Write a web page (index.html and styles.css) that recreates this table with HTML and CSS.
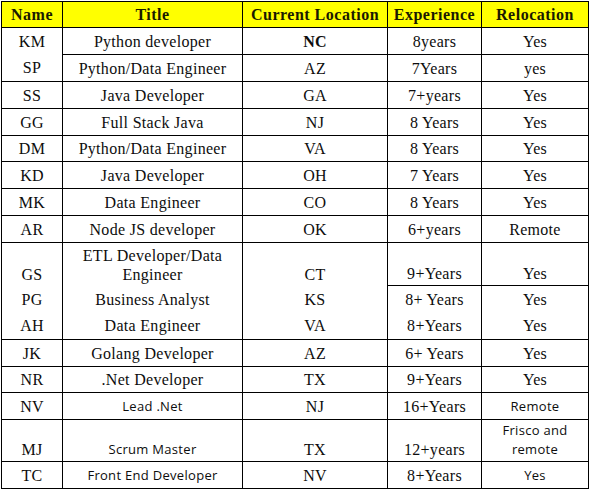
FILE: index.html
```html
<!DOCTYPE html>
<html>
<head>
<meta charset="utf-8">
<link rel="stylesheet" href="styles.css">
</head>
<body>
<table class="grid">
  <colgroup>
    <col class="c-name"><col class="c-title"><col class="c-loc"><col class="c-exp"><col class="c-rel">
  </colgroup>
  <thead>
    <tr class="h26">
      <th>Name</th><th>Title</th><th>Current Location</th><th>Experience</th><th>Relocation</th>
    </tr>
  </thead>
  <tbody>
    <tr class="h27"><td class="nb">KM</td><td>Python developer</td><td class="b">NC</td><td>8years</td><td>Yes</td></tr>
    <tr class="h27"><td class="nt">SP</td><td>Python/Data Engineer</td><td>AZ</td><td>7Years</td><td>yes</td></tr>
    <tr class="h27"><td>SS</td><td>Java Developer</td><td>GA</td><td>7+years</td><td>Yes</td></tr>
    <tr class="h27"><td>GG</td><td>Full Stack Java</td><td>NJ</td><td>8 Years</td><td>Yes</td></tr>
    <tr class="h26"><td>DM</td><td>Python/Data Engineer</td><td>VA</td><td>8 Years</td><td>Yes</td></tr>
    <tr class="h27"><td>KD</td><td>Java Developer</td><td>OH</td><td>7 Years</td><td>Yes</td></tr>
    <tr class="h27"><td>MK</td><td>Data Engineer</td><td>CO</td><td>8 Years</td><td>Yes</td></tr>
    <tr class="h27"><td>AR</td><td>Node JS developer</td><td>OK</td><td>6+years</td><td>Remote</td></tr>
    <tr class="h43 bot"><td class="nb">GS</td><td class="nb">ETL Developer/Data<br>Engineer</td><td class="nb">CT</td><td>9+Years</td><td>Yes</td></tr>
    <tr class="h27"><td class="nt nb">PG</td><td class="nt nb">Business Analyst</td><td class="nt nb">KS</td><td class="nb">8+ Years</td><td class="nb">Yes</td></tr>
    <tr class="h27"><td class="nt">AH</td><td class="nt">Data Engineer</td><td class="nt">VA</td><td class="nt">8+Years</td><td class="nt">Yes</td></tr>
    <tr class="h27"><td>JK</td><td>Golang Developer</td><td>AZ</td><td>6+ Years</td><td>Yes</td></tr>
    <tr class="h26"><td>NR</td><td>.Net Developer</td><td>TX</td><td>9+Years</td><td>Yes</td></tr>
    <tr class="h27"><td>NV</td><td class="sans">Lead .Net</td><td>NJ</td><td>16+Years</td><td class="sans">Remote</td></tr>
    <tr class="h42 bot"><td>MJ</td><td class="sans">Scrum Master</td><td>TX</td><td>12+years</td><td class="sans">Frisco and<br>remote</td></tr>
    <tr class="h27"><td>TC</td><td class="sans">Front End Developer</td><td>NV</td><td>8+Years</td><td class="sans">Yes</td></tr>
  </tbody>
</table>
</body>
</html>
```

FILE: styles.css
```css
html, body {
  margin: 0;
  padding: 0;
  background: #ffffff;
}

body {
  padding: 1px 0 0 1px;
}

.grid {
  border-collapse: collapse;
  table-layout: fixed;
  width: 588px;
  font-family: "Liberation Serif", "Times New Roman", serif;
  font-size: 16px;
  letter-spacing: 0.3px;
  color: #0d0d0d;
}

.c-name { width: 61px; }
.c-title { width: 180px; }
.c-loc { width: 145px; }
.c-exp { width: 94px; }
.c-rel { width: 107px; }

.grid th,
.grid td {
  border: 1px solid #000000;
  padding: 0 2px;
  text-align: center;
  vertical-align: middle;
  line-height: 19px;
  white-space: nowrap;
}

.grid th {
  background: #ffff00;
  font-size: 16px;
  font-weight: bold;
  letter-spacing: 0.5px;
  color: #1a1a00;
}

.h26 { height: 26px; }
.h27 { height: 27px; }
.h42 { height: 42px; }
.h43 { height: 43px; }

.bot td {
  vertical-align: bottom;
  padding-bottom: 2px;
}

.grid td.nb { border-bottom-style: hidden; }
.grid td.nt { border-top-style: hidden; }

.b { font-weight: bold; }

.sans {
  font-family: "Open Sans", "Noto Sans", sans-serif;
  font-size: 13px;
  letter-spacing: 0.3px;
}
```
